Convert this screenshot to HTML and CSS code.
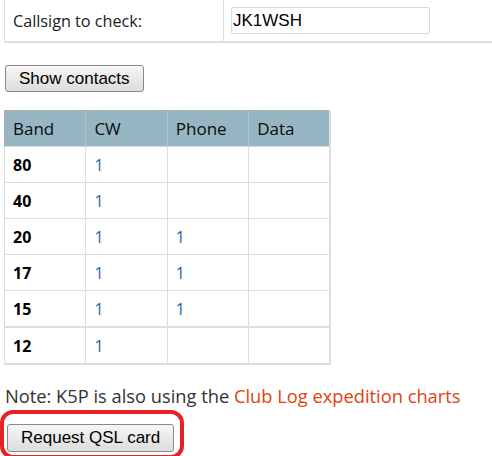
FILE: index.html
```html
<!DOCTYPE html>
<html>
<head>
<meta charset="utf-8">
<link rel="stylesheet" href="styles.css">
</head>
<body>
<table class="form">
  <tr>
    <td class="label">Callsign to check:</td>
    <td class="field"><input class="call" type="text" value="JK1WSH"></td>
  </tr>
</table>
<div class="actions">
  <button class="btn">Show contacts</button>
</div>
<table class="bands">
  <thead>
    <tr><th>Band</th><th>CW</th><th>Phone</th><th>Data</th></tr>
  </thead>
  <tbody>
    <tr><td class="band">80</td><td class="q">1</td><td></td><td></td></tr>
    <tr><td class="band">40</td><td class="q">1</td><td></td><td></td></tr>
    <tr><td class="band">20</td><td class="q">1</td><td class="q">1</td><td></td></tr>
    <tr><td class="band">17</td><td class="q">1</td><td class="q">1</td><td></td></tr>
    <tr><td class="band">15</td><td class="q">1</td><td class="q">1</td><td></td></tr>
  </tbody>
  <tbody class="last">
    <tr><td class="band">12</td><td class="q">1</td><td></td><td></td></tr>
  </tbody>
</table>
<p class="note">Note: K5P is also using the <a class="link" href="#">Club Log expedition charts</a></p>
<div class="qsl">
  <span class="ring"><button class="btn btn-qsl">Request QSL card</button></span>
</div>
</body>
</html>
```
FILE: styles.css
```css
html, body {
  margin: 0;
  padding: 0;
  background: #ffffff;
  overflow: hidden;
}
body {
  width: 492px;
  height: 456px;
  font-family: "Open Sans", "Noto Sans", sans-serif;
  font-size: 16px;
  color: #111;
}
.form {
  margin-left: 4px;
  width: 488px;
  border-collapse: collapse;
  border-left: 1px solid #dddddd;
  border-bottom: 2px solid #dddddd;
}
.form td {
  height: 41px;
  padding: 0;
  vertical-align: middle;
}
.form .label {
  box-sizing: border-box;
  width: 219px;
  padding-left: 8px;
  border-right: 1px solid #dddddd;
  color: #1a1a1a;
  font-size: 16.2px;
  line-height: 22px;
}
.form .field {
  padding-left: 7px;
}
.call {
  box-sizing: border-box;
  width: 199px;
  height: 27px;
  margin: 0;
  padding: 0 1px;
  border: 1px solid #d3dae0;
  border-radius: 2px;
  font-family: "Liberation Sans", Arial, sans-serif;
  font-size: 17px;
  color: #000;
  display: block;
}
.actions {
  padding: 22px 0 0 5px;
}
.btn {
  box-sizing: border-box;
  height: 27px;
  padding: 0 13px 0 13px;
  margin: 0;
  border: 1px solid #8a8a8a;
  border-radius: 3px;
  background: linear-gradient(#f7f7f7, #dcdcdc);
  font-family: "Liberation Sans", Arial, sans-serif;
  font-size: 17px;
  line-height: 25px;
  color: #000;
  display: block;
}
.bands {
  margin: 18px 0 0 4px;
  border-collapse: collapse;
  table-layout: fixed;
  border-right: 2px solid #dddddd;
  border-bottom: 2px solid #dddddd;
  width: 327px;
}
.bands th {
  background: #97b6c4;
  text-align: left;
  font-weight: normal;
  height: 35px;
  padding: 0 8px;
  border-top: 1px solid #a9afb3;
  border-left: 1px solid #b6c3c9;
  font-size: 17px;
  line-height: 22px;
  color: #0a0a0a;
}
.bands th:first-child {
  border-left: 1px solid #a9afb3;
}
.bands td {
  height: 35px;
  padding: 0 8px;
  border: 1px solid #dddddd;
  font-size: 16px;
  line-height: 22px;
}
.bands .band {
  font-weight: bold;
  color: #000;
}
.bands .q {
  color: #1f62a8;
}
.bands .last td {
  border-top: 2px solid #dddddd;
}
.note {
  margin: 20px 0 0 5px;
  color: #333;
  font-size: 18.3px;
  line-height: 22px;
  white-space: nowrap;
}
.link {
  color: #e0420f;
  text-decoration: none;
}
.qsl {
  padding: 17px 0 0 0;
}
.ring {
  position: relative;
  display: inline-block;
  margin-left: 7px;
  vertical-align: top;
}
.ring::after {
  content: "";
  position: absolute;
  left: -7px;
  top: -14px;
  right: -10px;
  bottom: -7px;
  border: 4px solid #e8202a;
  border-radius: 13px;
}
.btn-qsl {
  height: 28px;
  line-height: 26px;
}
```
